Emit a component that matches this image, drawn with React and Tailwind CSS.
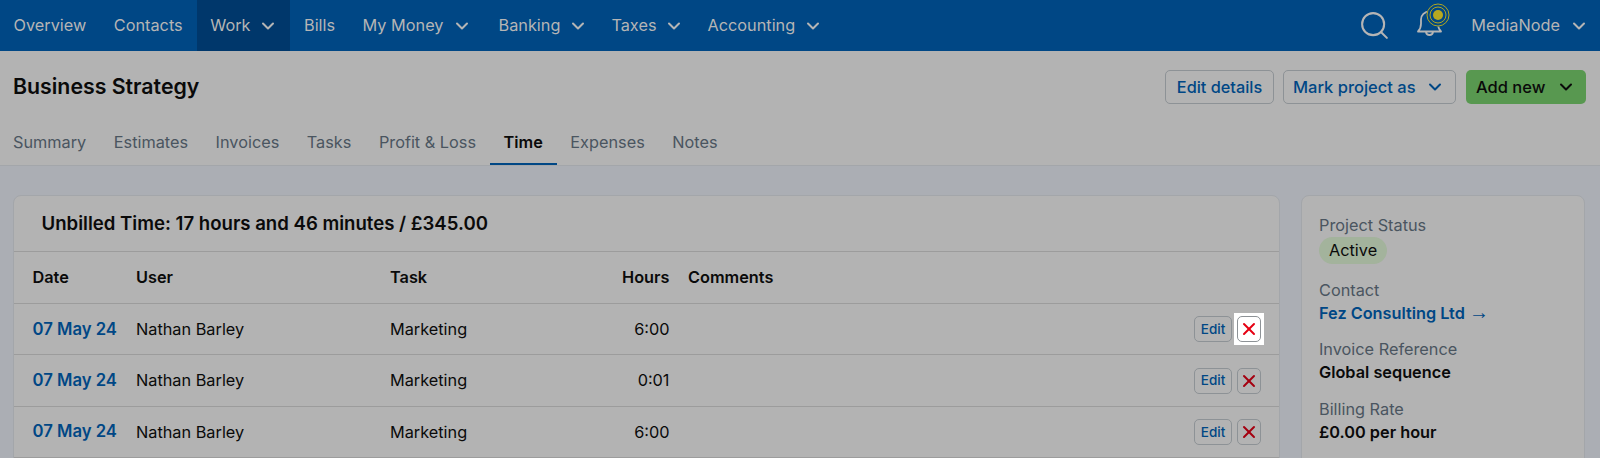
import React from "react";
import { ChevronDown, Search, X } from "lucide-react";

const navItems = [
  { label: "Overview", pad: "pr-[14px]" },
  { label: "Contacts", pad: "pr-[14px]" },
  { label: "Work", menu: true, active: true, pad: "pr-[12px]" },
  { label: "Bills", pad: "pr-[14px]" },
  { label: "My Money", menu: true, pad: "pr-[13.500px]" },
  { label: "Banking", menu: true, pad: "pr-[9.500px]" },
  { label: "Taxes", menu: true, pad: "pr-[9.500px]" },
  { label: "Accounting", menu: true, pad: "pr-[9.500px]" },
];

const tabs = ["Summary", "Estimates", "Invoices", "Tasks", "Profit & Loss", "Time", "Expenses", "Notes"];

const rows = [
  { hours: "6:00", highlight: true },
  { hours: "0:01" },
  { hours: "6:00" },
];

const Bell = () => (
  <svg width="34" height="38" viewBox="0 0 34 38" fill="none" className="-mt-[11px]">
    <path
      d="M10 31c.3 2 1.800 3 3.500 3s3.200-1 3.500-3M2 30.500h23c-1.500-1.500-3-3.500-3-8v-4c0-4.500-3.500-8-8.500-8s-8.500 3.500-8.500 8v4c0 4.500-1.500 6.500-3 8z"
      stroke="#b5b5b5"
      strokeWidth="1.8"
      strokeLinejoin="round"
    />
    <circle cx="22" cy="14" r="11.500" fill="#004785" />
    <circle cx="22" cy="14" r="11" stroke="#b0a621" strokeWidth="1" />
    <circle cx="22" cy="14" r="8" stroke="#b0a621" strokeWidth="1" />
    <circle cx="22" cy="14" r="5" fill="#b5a921" />
  </svg>
);

const Chevron = () => <ChevronDown size={20} strokeWidth={2.4} />;

const Field = ({ label, children, className = "" }) => (
  <div className={className}>
    <div className="text-[#4a5560] h-[23px] leading-[23px]">{label}</div>
    {children}
  </div>
);

export default function App() {
  return (
    <div className="h-[458px] overflow-hidden bg-[#abaeb4] text-[16.300px] font-['Inter','Liberation_Sans',sans-serif] text-[#0a0a0a]">
      <div className="h-[51px] bg-[#004785] flex justify-between text-[#b5b5b5]">
        <div className="flex">
          {navItems.map((item) => (
            <div
              key={item.label}
              className={`h-full flex items-center gap-[8px] pl-[13.500px] ${item.pad} ${
                item.active ? "bg-[#00376b]" : ""
              }`}
            >
              {item.label}
              {item.menu && <Chevron />}
            </div>
          ))}
        </div>
        <div className="flex items-center pr-[11px]">
          <Search size={33} strokeWidth={1.5} className="mr-[25px]" />
          <Bell />
          <span className="ml-[21px] mr-[9px]">MediaNode</span>
          <Chevron />
        </div>
      </div>

      <div className="h-[115px] bg-[#b3b3b3] border-b border-[#a3a6aa] px-[13px]">
        <div className="h-[72px] flex items-center justify-between pr-px">
          <h1 className="text-[21.300px] font-semibold">Business Strategy</h1>
          <div className="flex gap-[10px] font-medium">
            <button className="h-[34px] w-[109px] -mr-px rounded-[5px] border border-[#8d9296] text-[#004785]">Edit details</button>
            <button className="h-[34px] w-[173px] pl-[9px] pr-[10px] rounded-[5px] border border-[#8d9296] text-[#004785] text-[16.500px] flex items-center justify-between">
              Mark project as <Chevron />
            </button>
            <button className="h-[34px] w-[120px] pl-[10px] pr-[10px] rounded-[5px] bg-[#589850] text-[16.500px] flex items-center justify-between">
              Add new <Chevron />
            </button>
          </div>
        </div>
        <div className="flex gap-[27.500px] h-[42px] text-[#4a5560]">
          {tabs.map((tab) =>
            tab === "Time" ? (
              <div key={tab} className="-mx-[14px] px-[14px] border-b-2 border-[#004785] font-semibold text-[#0a0a0a] pt-[7px]">
                {tab}
              </div>
            ) : (
              <div key={tab} className="pt-[7px]">{tab}</div>
            )
          )}
        </div>
      </div>

      <div className="flex gap-[21px] pt-[29px] pl-[13px]">
        <div className="w-[1267px] shrink-0 h-[300px] rounded-lg bg-[#b3b3b3] border border-[#a3a6aa]">
          <div className="h-[56px] flex items-center pl-[27.500px] text-[18.600px] font-semibold border-b border-[#9c9c9c]">
            Unbilled Time: 17 hours and 46 minutes / £345.00
          </div>
          <div className="h-[52px] flex items-center font-semibold border-b border-[#9c9c9c]">
            <div className="w-[122px] pl-[18.500px]">Date</div>
            <div className="w-[254px]">User</div>
            <div className="w-[180px]">Task</div>
            <div className="w-[99.500px] text-right">Hours</div>
            <div className="pl-[18.500px]">Comments</div>
          </div>
          {rows.map((row, i) => (
            <div key={i} className="h-[51.400px] flex items-center border-b border-[#9c9c9c]">
              <div className="w-[122px] pl-[18.500px] text-[16.700px] font-semibold text-[#004785]">07 May 24</div>
              <div className="w-[254px]">Nathan Barley</div>
              <div className="w-[180px]">Marketing</div>
              <div className="w-[99.500px] text-right">{row.hours}</div>
              <div className="ml-auto mr-[18px] flex gap-[5px]">
                <button className="h-[26px] w-[38px] rounded-[5px] border border-[#8d9296] text-[#004785] text-[13.500px] font-medium">
                  Edit
                </button>
                {/* the highlighted delete button sits on a white square */}
                <div className={row.highlight ? "bg-white p-[3px] -m-[3px]" : ""}>
                  <button
                    className={`h-[26px] w-[24px] rounded-[5px] border border-[#8d9296] flex items-center justify-center ${
                      row.highlight ? "text-[#e60012]" : "text-[#a50010]"
                    }`}
                  >
                    <X size={20} strokeWidth={2.4} />
                  </button>
                </div>
              </div>
            </div>
          ))}
        </div>

        <div className="w-[284px] shrink-0 h-[300px] rounded-lg bg-[#b3b3b3] border border-[#a3a6aa] pl-[17px] pt-[17.500px]">
          <Field label="Project Status" className="mb-[15px]">
            <div className="w-fit h-[27px] leading-[27px] px-[10px] rounded-full bg-[#a3b39c]">Active</div>
          </Field>
          <Field label="Contact" className="mb-[13px]">
            <div className="h-[23px] leading-[23px] font-semibold text-[#004785]">
              Fez Consulting Ltd <span className="font-normal font-['Liberation_Sans'] text-[20px] leading-none">→</span>
            </div>
          </Field>
          <Field label="Invoice Reference" className="mb-[14px]">
            <div className="h-[23px] leading-[23px] font-semibold">Global sequence</div>
          </Field>
          <Field label="Billing Rate">
            <div className="h-[23px] leading-[23px] font-semibold">£0.00 per hour</div>
          </Field>
        </div>
      </div>
    </div>
  );
}
